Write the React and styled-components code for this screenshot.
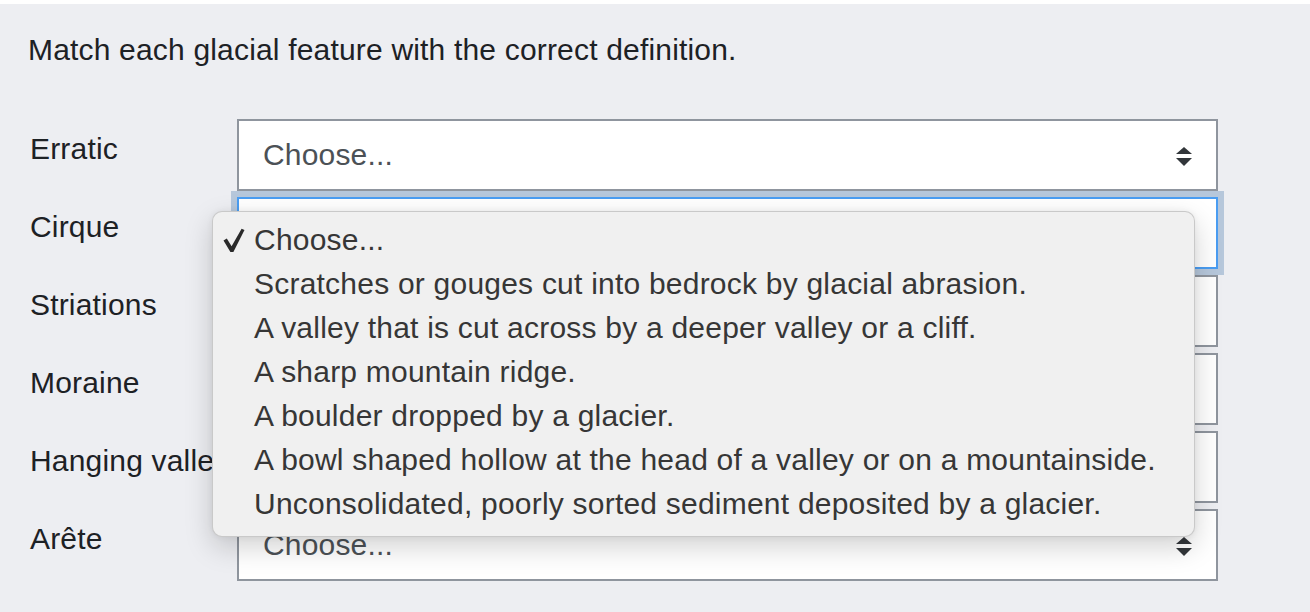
import React from "react";
import styled, { createGlobalStyle } from "styled-components";

const Global = createGlobalStyle`
  html, body { margin: 0; padding: 0; background: #ffffff; }
  body { font-family: "Liberation Sans", Arial, sans-serif; }
  * { box-sizing: border-box; }
`;

const Page = styled.div`
  position: relative;
  margin-top: 4px;
  height: 608px;
  background: #edeef2;
  padding: 23px 0 0 28px;
  overflow: hidden;
`;

const Question = styled.div`
  font-size: 30px;
  line-height: 45px;
  letter-spacing: 0.18px;
  color: #1d2125;
  margin-bottom: 47px;
`;

const Grid = styled.div`
  display: grid;
  grid-template-columns: 209px 981px;
  grid-auto-rows: 72px;
  row-gap: 6px;
`;

const Label = styled.div`
  font-size: 30px;
  line-height: 45px;
  letter-spacing: 0.18px;
  color: #1d2125;
  padding: 7px 0 0 2px;
  white-space: nowrap;
`;

const SelectBox = styled.div`
  display: flex;
  align-items: center;
  justify-content: space-between;
  height: 72px;
  background: #ffffff;
  border: 2px solid ${(p) => (p.$focused ? "#4a9df2" : "#8f959e")};
  box-shadow: ${(p) => (p.$focused ? "0 0 0 6px #b6c7db" : "none")};
  padding: 0 24px 0 24px;
  font-size: 30px;
  letter-spacing: 0.18px;
  color: #4c5156;
`;

const Arrows = styled.svg`
  width: 16px;
  height: 19px;
  flex: none;
  margin-top: 2px;
`;

const Menu = styled.div`
  position: absolute;
  left: 212px;
  top: 207px;
  width: 983px;
  height: 326px;
  background: #f0f0f0;
  border: 1px solid rgba(0, 0, 0, 0.16);
  border-radius: 10px;
  box-shadow: 0 10px 28px rgba(0, 0, 0, 0.18), 0 0 6px rgba(0, 0, 0, 0.06);
  padding-top: 6px;
`;

const Item = styled.div`
  position: relative;
  height: 44px;
  line-height: 44px;
  font-size: 30px;
  letter-spacing: 0.22px;
  color: #363636;
  padding-left: 41px;
  white-space: nowrap;
`;

const Check = styled.svg`
  position: absolute;
  left: 10px;
  top: 10px;
  width: 22px;
  height: 25px;
`;

const ArrowIcon = () => (
  <Arrows viewBox="0 0 16 19">
    <path d="M8 0 L16 7 L0 7 Z" fill="#32363a" />
    <path d="M0 11 L16 11 L8 19 Z" fill="#32363a" />
  </Arrows>
);

const labels = ["Erratic", "Cirque", "Striations", "Moraine", "Hanging valley", "Arête"];

const options = [
  "Choose...",
  "Scratches or gouges cut into bedrock by glacial abrasion.",
  "A valley that is cut across by a deeper valley or a cliff.",
  "A sharp mountain ridge.",
  "A boulder dropped by a glacier.",
  "A bowl shaped hollow at the head of a valley or on a mountainside.",
  "Unconsolidated, poorly sorted sediment deposited by a glacier.",
];

export default function App() {
  return (
    <>
      <Global />
      <Page>
        <Question>Match each glacial feature with the correct definition.</Question>
        <Grid>
          {labels.map((l, i) => (
            <React.Fragment key={l}>
              <Label>{l}</Label>
              <SelectBox $focused={i === 1}>
                <span>Choose...</span>
                <ArrowIcon />
              </SelectBox>
            </React.Fragment>
          ))}
        </Grid>
        <Menu>
          {options.map((o, i) => (
            <Item key={o}>
              {i === 0 && (
                <Check viewBox="0 0 22 25">
                  <path d="M0.5 12.5 L3.8 10.6 L8.6 18.2 L18.6 0.8 L21.5 2 L10.4 24 L7.4 24 Z" fill="#2a2a2a" />
                </Check>
              )}
              {o}
            </Item>
          ))}
        </Menu>
      </Page>
    </>
  );
}
